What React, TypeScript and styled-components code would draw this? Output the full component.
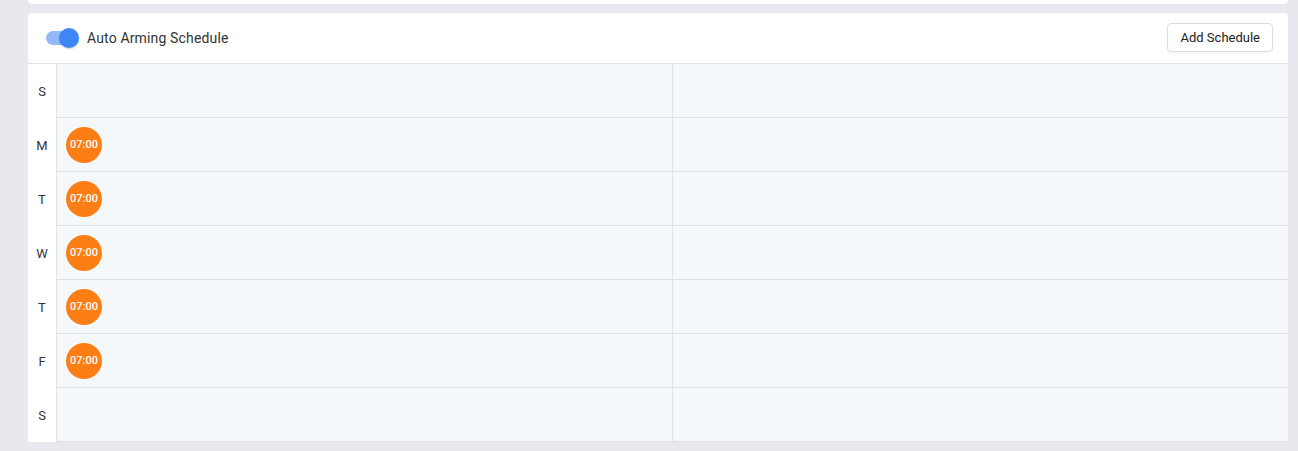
import React from 'react';
import styled, { createGlobalStyle } from 'styled-components';

const GlobalStyle = createGlobalStyle`
  html, body {
    margin: 0;
    padding: 0;
    background: #e9e8ee;
    font-family: Roboto, "Liberation Sans", Arial, sans-serif;
  }
`;

const Page = styled.div`
  width: 1298px;
  height: 451px;
  padding: 0 10px 0 28px;
  box-sizing: border-box;
  display: flex;
  flex-direction: column;
  gap: 9px;
`;

const TopCard = styled.div`
  height: 4px;
  background: #fff;
  border-radius: 0 0 4px 4px;
`;

const Card = styled.section`
  background: #fff;
  border-radius: 4px 4px 0 0;
  overflow: hidden;
`;

const Header = styled.header`
  height: 50px;
  display: flex;
  align-items: center;
  justify-content: space-between;
  padding: 0 15px 0 18px;
  border-bottom: 1px solid #dee0e3;
`;

const ToggleLabel = styled.label`
  display: flex;
  align-items: center;
  gap: 9px;
  font-size: 14px;
  letter-spacing: 0.15px;
  color: #333;
  margin-top: -1px;
`;

const Track = styled.span<{ $on: boolean }>`
  position: relative;
  width: 30px;
  height: 14px;
  border-radius: 7px;
  background: ${p => (p.$on ? '#93b9fa' : '#ccc')};
  margin-right: 2px;
`;

const Knob = styled.span<{ $on: boolean }>`
  position: absolute;
  top: -3px;
  left: ${p => (p.$on ? '13px' : '-2px')};
  width: 20px;
  height: 20px;
  border-radius: 50%;
  background: #3d86f6;
  box-shadow: 0 1px 2px rgba(0, 0, 0, 0.2);
`;

const Button = styled.button`
  height: 29px;
  padding: 0 12px 0 13px;
  background: #fff;
  border: 1px solid #dcdde0;
  border-radius: 4px;
  font-family: inherit;
  font-size: 13px;
  color: #222;
  box-shadow: 0 1px 2px rgba(0, 0, 0, 0.05);
  margin-top: -2px;
`;

const Grid = styled.div`
  display: grid;
  grid-template-columns: 29px 1fr 1fr;
`;

const DayCell = styled.div`
  height: 54px;
  display: flex;
  align-items: center;
  justify-content: center;
  font-size: 13px;
  color: #333;
  border-right: 1px solid #dee0e3;
  box-sizing: border-box;
`;

const SlotCell = styled.div<{ $last?: boolean }>`
  height: 54px;
  box-sizing: border-box;
  background: #f5f8fb;
  border-bottom: 1px solid #dee0e3;
  border-right: ${p => (p.$last ? 'none' : '1px solid #dee0e3')};
  display: flex;
  align-items: center;
  padding-left: 9px;
`;

const TimeBadge = styled.span`
  width: 36px;
  height: 36px;
  border-radius: 50%;
  background: #fd7e14;
  color: #fff;
  font-size: 11px;
  font-weight: 500;
  display: flex;
  align-items: center;
  justify-content: center;
  box-shadow: 0 0 0 1px rgba(255, 255, 255, 0.6);
`;

const days = [
  { d: 'S', t: null },
  { d: 'M', t: '07:00' },
  { d: 'T', t: '07:00' },
  { d: 'W', t: '07:00' },
  { d: 'T', t: '07:00' },
  { d: 'F', t: '07:00' },
  { d: 'S', t: null },
];

export default function App() {
  return (
    <>
      <GlobalStyle />
      <Page>
        <TopCard />
        <Card>
          <Header>
            <ToggleLabel>
              <Track $on>
                <Knob $on />
              </Track>
              Auto Arming Schedule
            </ToggleLabel>
            <Button>Add Schedule</Button>
          </Header>
          <Grid>
            {days.map((row, i) => (
              <React.Fragment key={i}>
                <DayCell>{row.d}</DayCell>
                <SlotCell>{row.t && <TimeBadge>{row.t}</TimeBadge>}</SlotCell>
                <SlotCell $last />
              </React.Fragment>
            ))}
          </Grid>
        </Card>
      </Page>
    </>
  );
}
